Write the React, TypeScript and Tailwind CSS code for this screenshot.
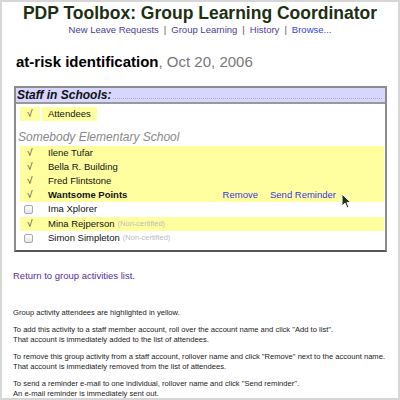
import React from "react";

type Person = {
  name: string;
  attending: boolean;
  bold?: boolean;
  note?: string;
  actions?: boolean;
  h: string;
};

const people: Person[] = [
  { name: "Ilene Tufar", attending: true, h: "h-[14px]" },
  { name: "Bella R. Building", attending: true, h: "h-[14px]" },
  { name: "Fred Flintstone", attending: true, h: "h-[14px]" },
  { name: "Wantsome Points", attending: true, bold: true, actions: true, h: "h-[14px]" },
  { name: "Ima Xplorer", attending: false, h: "h-[15px]" },
  { name: "Mina Rejperson", attending: true, note: "(Non-certified)", h: "h-[14px]" },
  { name: "Simon Simpleton", attending: false, note: "(Non-certified)", h: "h-[14px]" },
];

function Check() {
  return <span className="text-[10px] leading-none text-[#333]">√</span>;
}

function EmptyBox() {
  return (
    <span className="block w-[9px] h-[9px] rounded-[2px] border border-[#a8a8a8] bg-gradient-to-b from-white to-[#e4e4e4]" />
  );
}

function Cursor() {
  return (
    <svg width="11" height="16" viewBox="0 0 11 16" className="absolute left-[339px] top-[191px]">
      <path
        d="M1 1 L1 13 L4 10.2 L6.2 15 L8 14.2 L5.9 9.6 L9.8 9.6 Z"
        fill="#1f3317"
        stroke="#ffffff"
        strokeWidth="1"
        strokeLinejoin="round"
      />
    </svg>
  );
}

export default function App() {
  return (
    <div
      className="relative w-[400px] h-[400px] border-2 border-[#d6d6d6] bg-white overflow-hidden"
      style={{ fontFamily: '"Liberation Sans", Arial, sans-serif' }}
    >
      {/* page title + nav */}
      <h1 className="mt-[1px] text-center text-[17.5px] leading-[20px] font-bold text-[#1d3013]">
        PDP Toolbox: Group Learning Coordinator
      </h1>
      <div className="mt-[1px] flex justify-center text-[9.5px] leading-[12px]">
        <a className="text-[#4b3b96]">New Leave Requests</a>
        <span className="mx-[5px] text-[#555]">|</span>
        <a className="text-[#4b3b96]">Group Learning</a>
        <span className="mx-[5px] text-[#555]">|</span>
        <a className="text-[#4b3b96]">History</a>
        <span className="mx-[5px] text-[#555]">|</span>
        <a className="text-[#3344dd]">Browse...</a>
      </div>

      <div className="mt-[17px] ml-[14px] text-[15px] leading-[18px]">
        <span className="font-bold text-black">at-risk identification</span>
        <span className="text-[#777]">, Oct 20, 2006</span>
      </div>

      {/* staff panel */}
      <div className="mt-[15px] ml-[12px] w-[373px] border-2 border-[#8c8c8c] border-b-[#555]">
        <div className="flex items-center h-[16px] bg-[#d6d6ff] border-b-2 border-[#999] pl-[1px] pr-[3px]">
          <span className="text-[12px] leading-[15px] font-bold italic text-[#111]">Staff in Schools:</span>
          <span className="flex-1 ml-[2px] self-end mb-[3px] border-b border-dotted border-[#aab]" />
        </div>

        <div className="pl-[4px] pr-[1px] pt-[3px] pb-[5px]">
          <div className="flex h-[14px] text-[9.5px]">
            <div className="w-[20px] bg-[#ffffa0] flex items-center pl-[7px]">
              <Check />
            </div>
            <div className="ml-[2px] bg-[#ffffa0] flex items-center pl-[6px] pr-[6px] text-[#111]">Attendees</div>
          </div>

          <div className="mt-[9px] mb-[2px] -ml-[2px] text-[12px] leading-[14px] italic text-[#888]">
            Somebody Elementary School
          </div>

          {people.map((p) => (
            <div
              key={p.name}
              className={`flex items-center ${p.h} text-[9.5px] ${p.attending ? "bg-[#ffffa0]" : "bg-white"}`}
            >
              <div className="w-[28px] flex items-center pl-[4px]">
                {p.attending ? <span className="pl-[3px]"><Check /></span> : <EmptyBox />}
              </div>
              <span className={`text-[#111] ${p.bold ? "font-bold" : ""}`}>{p.name}</span>
              {p.note && <span className="ml-[3px] text-[7.5px] text-[#bbb]">{p.note}</span>}
              {p.actions && (
                <>
                  <span className="flex-1" />
                  <a className="text-[#3535e0]">Remove</a>
                  <a className="ml-[12px] mr-[48px] text-[#3535e0]">Send Reminder</a>
                </>
              )}
            </div>
          ))}
        </div>
      </div>

      <a className="block mt-[18px] ml-[11px] text-[9.5px] leading-[12px] text-[#5a2d9a]">
        Return to group activities list.
      </a>

      {/* help text */}
      <div className="mt-[26px] ml-[11px] text-[7.6px] leading-[10px] text-[#222] space-y-[7px]">
        <p>Group activity attendees are highlighted in yellow.</p>
        <p>
          To add this activity to a staff member account, roll over the account name and click "Add to list".
          <br />
          That account is immediately added to the list of attendees.
        </p>
        <p>
          To remove this group activity from a staff account, rollover name and click "Remove" next to the account name.
          <br />
          That account is immediately removed from the list of attendees.
        </p>
        <p>
          To send a reminder e-mail to one individual, rollover name and click "Send reminder".
          <br />
          An e-mail reminder is immediately sent out.
        </p>
      </div>

      <Cursor />
    </div>
  );
}
